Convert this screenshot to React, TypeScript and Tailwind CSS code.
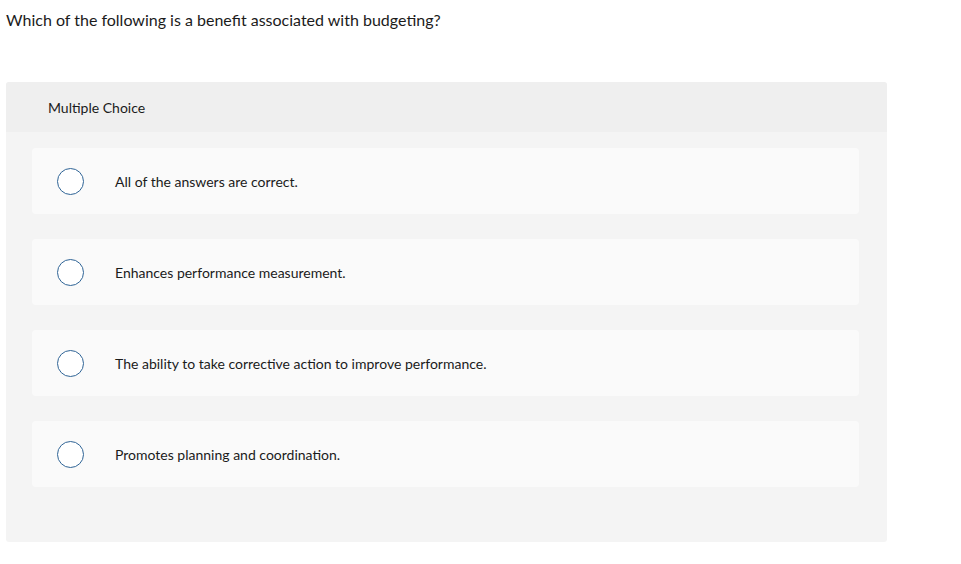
import React from 'react';

const options = [
  'All of the answers are correct.',
  'Enhances performance measurement.',
  'The ability to take corrective action to improve performance.',
  'Promotes planning and coordination.',
];

const App: React.FC = () => {
  return (
    <div className="w-[961px] h-[564px] bg-white text-[#1b1b1b] font-['Lato','Liberation_Sans',sans-serif]">
      <p className="pl-[6px] pt-[10px] text-[16px] leading-[20px]">
        Which of the following is a benefit associated with budgeting?
      </p>

      <div className="ml-[6px] mt-[52px] w-[881px] h-[460px] rounded-[3px] bg-[#f4f4f4]">
        <div className="h-[50px] rounded-t-[3px] bg-[#efefef] pl-[42px] flex items-center">
          <span className="text-[14px]">Multiple Choice</span>
        </div>

        <div className="pt-[16px] pl-[26px] flex flex-col gap-[25px]">
          {options.map((opt) => (
            <div
              key={opt}
              className="w-[827px] h-[66px] rounded-[4px] bg-[#fafafa] flex items-center"
            >
              <span className="ml-[25px] w-[27px] h-[27px] rounded-full border-[1.5px] border-[#2f6496] bg-white shrink-0" />
              <span className="ml-[31px] pt-[1px] text-[14px]">{opt}</span>
            </div>
          ))}
        </div>
      </div>
    </div>
  );
};

export default App;
